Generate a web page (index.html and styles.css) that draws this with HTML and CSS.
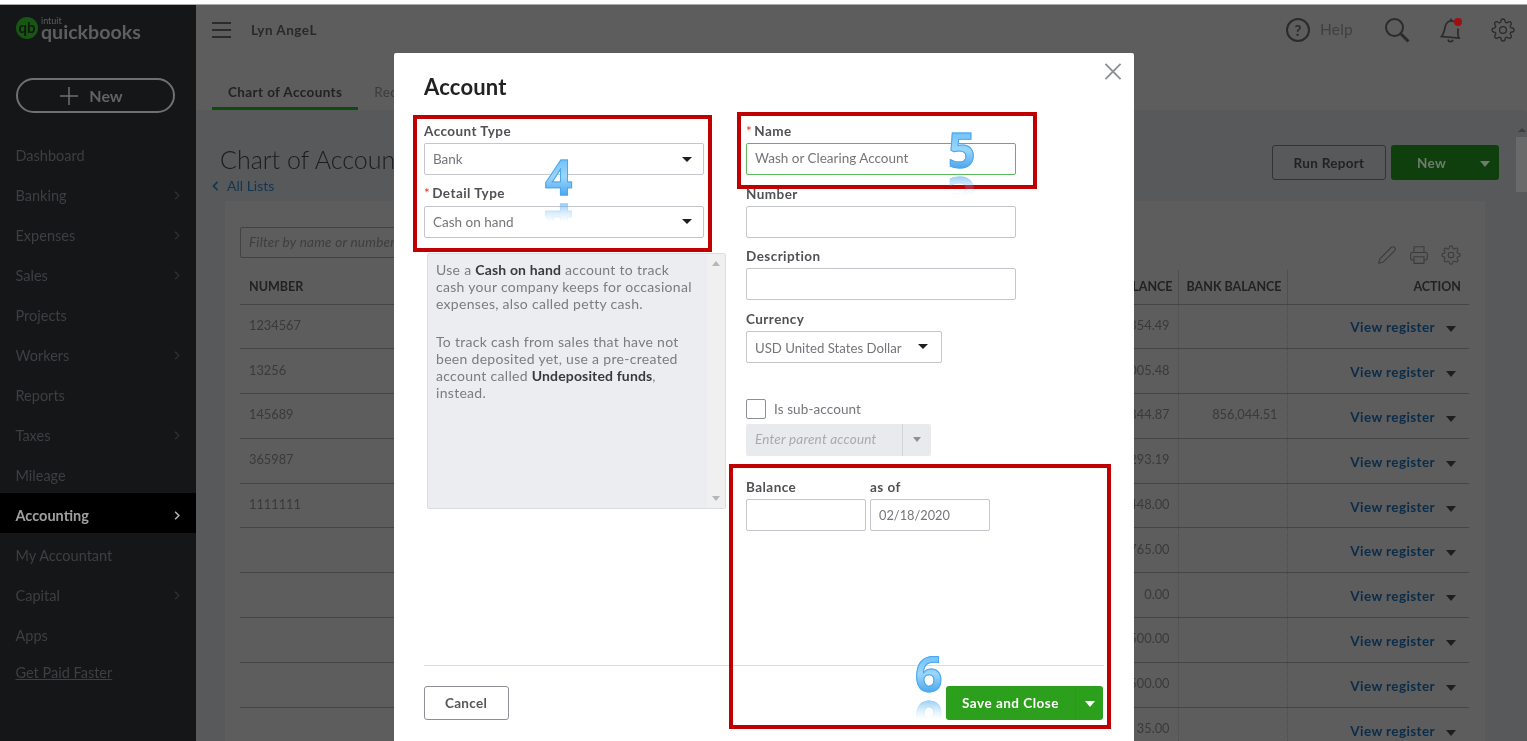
FILE: index.html
```html
<!DOCTYPE html>
<html lang="en">
<head>
<meta charset="utf-8">
<title>Chart of Accounts</title>
<link rel="stylesheet" href="styles.css">
</head>
<body>
<svg class="defs" width="0" height="0">
  <symbol id="gear" viewBox="0 0 24 24"><circle cx="12" cy="12" r="3.4"/><path d="M19.4 15a1.65 1.65 0 0 0 .33 1.82l.06.06a2 2 0 0 1 0 2.83 2 2 0 0 1-2.83 0l-.06-.06a1.65 1.65 0 0 0-1.82-.33 1.65 1.65 0 0 0-1 1.51V21a2 2 0 0 1-2 2 2 2 0 0 1-2-2v-.09A1.65 1.65 0 0 0 9 19.4a1.65 1.65 0 0 0-1.82.33l-.06.06a2 2 0 0 1-2.83 0 2 2 0 0 1 0-2.83l.06-.06a1.65 1.65 0 0 0 .33-1.82 1.65 1.65 0 0 0-1.51-1H3a2 2 0 0 1-2-2 2 2 0 0 1 2-2h.09A1.65 1.65 0 0 0 4.6 9a1.65 1.65 0 0 0-.33-1.82l-.06-.06a2 2 0 0 1 0-2.83 2 2 0 0 1 2.83 0l.06.06a1.65 1.65 0 0 0 1.82.33H9a1.65 1.65 0 0 0 1-1.51V3a2 2 0 0 1 2-2 2 2 0 0 1 2 2v.09a1.65 1.65 0 0 0 1 1.51 1.65 1.65 0 0 0 1.82-.33l.06-.06a2 2 0 0 1 2.83 0 2 2 0 0 1 0 2.83l-.06.06a1.65 1.65 0 0 0-.33 1.82V9a1.65 1.65 0 0 0 1.51 1H21a2 2 0 0 1 2 2 2 2 0 0 1-2 2h-.09a1.65 1.65 0 0 0-1.51 1z"/></symbol>
  <symbol id="chev" viewBox="0 0 8 12"><path d="M1.5 1l5 5-5 5"/></symbol>
</svg>

<div class="strip"></div>
<div class="app">
  <aside class="side">
    <div class="logo">
      <span class="qb">qb</span>
      <span class="wordmark"><span class="intuit">intuit</span><span class="qbname">quickbooks</span></span>
    </div>
    <button class="pill"><svg class="plus" viewBox="0 0 18 18"><path d="M9 0v18M0 9h18"/></svg>New</button>
    <nav class="nav">
      <a class="nav-item">Dashboard</a>
      <a class="nav-item">Banking<svg class="chev"><use href="#chev"/></svg></a>
      <a class="nav-item">Expenses<svg class="chev"><use href="#chev"/></svg></a>
      <a class="nav-item">Sales<svg class="chev"><use href="#chev"/></svg></a>
      <a class="nav-item">Projects</a>
      <a class="nav-item">Workers<svg class="chev"><use href="#chev"/></svg></a>
      <a class="nav-item">Reports</a>
      <a class="nav-item">Taxes<svg class="chev"><use href="#chev"/></svg></a>
      <a class="nav-item">Mileage</a>
      <a class="nav-item active">Accounting<svg class="chev"><use href="#chev"/></svg></a>
      <a class="nav-item">My Accountant</a>
      <a class="nav-item">Capital<svg class="chev"><use href="#chev"/></svg></a>
      <a class="nav-item">Apps</a>
      <a class="nav-item paid">Get Paid Faster</a>
    </nav>
  </aside>

  <main class="main">
    <header class="top">
      <div class="burger"><i></i><i></i><i></i></div>
      <span class="company">Lyn AngeL</span>
      <div class="top-right">
        <span class="help-q">?</span>
        <span class="help">Help</span>
        <svg class="ic search" viewBox="0 0 26 26"><circle cx="10.5" cy="10.5" r="8.5"/><path class="thick" d="M17 17l7.5 7.5"/></svg>
        <span class="bell-wrap">
          <svg class="ic bell" viewBox="0 0 22 26"><path d="M14 4.5C9 2.8 6 5.5 5.2 9.5 4.2 15 3.5 17.500 1.500 19.500l17.500 1.500c-1.500-2.500-1.500-5-.8-9.500"/><path d="M8 22.500c.5 2.800 4 3 5 .4"/><path d="M11 1.500v2.500"/></svg>
          <span class="dot"></span>
        </span>
        <svg class="ic gear"><use href="#gear"/></svg>
      </div>
    </header>
    <div class="tabs">
      <span class="tab current">Chart of Accounts</span>
      <span class="tab">Reconcile</span>
    </div>
    <div class="body">
      <div class="page">
        <div class="title-row">
          <div>
            <h1>Chart of Accounts</h1>
            <a class="back"><svg class="back-chev" viewBox="0 0 8 12"><path d="M6.500 1l-5 5 5 5"/></svg>All Lists</a>
          </div>
          <div class="actions">
            <button class="run">Run Report</button>
            <button class="new">New<span class="caret light"></span></button>
          </div>
        </div>
        <section class="card">
          <div class="tools">
            <div class="filter">Filter by name or number</div>
            <div class="tool-icons">
              <svg class="ic tool" viewBox="0 0 24 24"><path d="M17 3a2.828 2.828 0 1 1 4 4L7.500 20.500 2 22l1.500-5.500L17 3z"/></svg>
              <svg class="ic tool" viewBox="0 0 24 24"><path d="M6 9V2h12v7M6 18H4a2 2 0 0 1-2-2v-5a2 2 0 0 1 2-2h16a2 2 0 0 1 2 2v5a2 2 0 0 1-2 2h-2M6 14h12v8H6z"/></svg>
              <svg class="ic tool"><use href="#gear"/></svg>
            </div>
          </div>
          <table class="coa">
            <colgroup><col><col class="c-bal"><col class="c-bank"><col class="c-act"></colgroup>
            <thead><tr><th>NUMBER</th><th class="num">BALANCE</th><th class="num">BANK BALANCE</th><th class="num">ACTION</th></tr></thead>
            <tbody>
              <tr><td>1234567</td><td class="num">354.49</td><td class="num"></td><td class="act"><a>View register</a><span class="caret"></span></td></tr>
              <tr><td>13256</td><td class="num">005.48</td><td class="num"></td><td class="act"><a>View register</a><span class="caret"></span></td></tr>
              <tr><td>145689</td><td class="num">844.87</td><td class="num">856,044.51</td><td class="act"><a>View register</a><span class="caret"></span></td></tr>
              <tr><td>365987</td><td class="num">293.19</td><td class="num"></td><td class="act"><a>View register</a><span class="caret"></span></td></tr>
              <tr><td>1111111</td><td class="num">448.00</td><td class="num"></td><td class="act"><a>View register</a><span class="caret"></span></td></tr>
              <tr><td></td><td class="num">765.00</td><td class="num"></td><td class="act"><a>View register</a><span class="caret"></span></td></tr>
              <tr><td></td><td class="num">0.00</td><td class="num"></td><td class="act"><a>View register</a><span class="caret"></span></td></tr>
              <tr><td></td><td class="num">500.00</td><td class="num"></td><td class="act"><a>View register</a><span class="caret"></span></td></tr>
              <tr><td></td><td class="num">500.00</td><td class="num"></td><td class="act"><a>View register</a><span class="caret"></span></td></tr>
              <tr><td></td><td class="num">35.00</td><td class="num"></td><td class="act"><a>View register</a><span class="caret"></span></td></tr>
            </tbody>
          </table>
        </section>
      </div>
      <div class="scrollbar"><span class="up"></span><span class="thumb"></span></div>
    </div>
  </main>
</div>

<div class="modal">
  <svg class="close" viewBox="0 0 18 18"><path d="M1 1l16 16M17 1L1 17"/></svg>
  <div class="modal-body">
    <h2>Account</h2>
    <div class="cols">
      <div class="col-left">
        <label class="lbl">Account Type</label>
        <div class="input select wide">Bank<span class="caret"></span></div>
        <label class="lbl"><span class="req">*</span>Detail Type</label>
        <div class="input select wide last">Cash on hand<span class="caret"></span></div>
        <div class="info">
          <p>Use a <b>Cash on hand</b> account to track cash your company keeps for occasional expenses, also called petty cash.</p>
          <p>To track cash from sales that have not been deposited yet, use a pre-created account called <b>Undeposited funds</b>, instead.</p>
          <div class="info-track"><span class="tri-up"></span><span class="tri-down"></span></div>
        </div>
      </div>
      <div class="col-right">
        <label class="lbl"><span class="req">*</span>Name</label>
        <div class="input focus">Wash or Clearing Account</div>
        <label class="lbl">Number</label>
        <div class="input"></div>
        <label class="lbl">Description</label>
        <div class="input"></div>
        <label class="lbl">Currency</label>
        <div class="input select currency">USD United States Dollar<span class="caret"></span></div>
        <div class="check-row"><span class="box"></span>Is sub-account</div>
        <div class="parent"><span class="parent-text">Enter parent account</span><span class="parent-drop"><span class="caret muted"></span></span></div>
        <div class="balance">
          <div class="bal-field"><label class="lbl">Balance</label><div class="input"></div></div>
          <div class="bal-field"><label class="lbl">as of</label><div class="input date">02/18/2020</div></div>
        </div>
      </div>
    </div>
  </div>
  <footer class="modal-foot">
    <button class="cancel">Cancel</button>
    <button class="save"><span class="save-text">Save and Close</span><span class="save-drop"><span class="caret white"></span></span></button>
  </footer>
</div>

<div class="mark mark-a"></div>
<div class="mark mark-b"></div>
<div class="mark mark-c"></div>
<span class="step step-4">4</span>
<span class="step step-5">5</span>
<span class="step step-6">6</span>
</body>
</html>
```

FILE: styles.css
```css
* { box-sizing: border-box; }
html, body { height: 100%; margin: 0; overflow: hidden; }
body { font-family: "Lato", "Open Sans", sans-serif; font-size: 14px; color: #2f3033; background: #fff; position: relative; filter: blur(.4px); }
.defs { position: absolute; }
button { font-family: inherit; }
h1, h2, p { margin: 0; }

.strip { height: 5px; background: #fff; border-bottom: 1px solid #aaa; }
.app { display: flex; height: 736px; }

/* sidebar */
.side { width: 196px; flex: none; background: #151618; color: #3e3f42; }
.logo { display: flex; align-items: flex-start; height: 50px; padding: 11px 0 0 16px; gap: 3px; }
.qb { width: 22px; height: 22px; border-radius: 50%; background: #175712; color: #0f1a0f; font-size: 15px; font-weight: 700; line-height: 20px; text-align: center; flex: none; margin-top: 1px; }
.wordmark { display: flex; flex-direction: column; color: #5e5f61; }
.intuit { font-size: 9px; line-height: 8px; margin-top: 1px; }
.qbname { font-size: 19.600px; font-weight: 700; line-height: 19px; margin-top: -3.500px; }
.pill { display: flex; align-items: center; justify-content: center; gap: 11px; width: 159px; height: 35px; margin: 23px 0 0 16px; background: transparent; border: 2px solid #6f7072; border-radius: 18px; color: #626365; font-size: 16px; font-weight: 700; padding: 0 8px 0 0; }
.plus { width: 18px; height: 18px; fill: none; stroke: #6f7072; stroke-width: 1.500; }
.nav { margin-top: 20px; display: flex; flex-direction: column; }
.nav-item { display: flex; align-items: center; justify-content: space-between; height: 40px; padding: 4px 16px 0 15.500px; font-size: 14.500px; }
.chev { width: 6px; height: 11px; fill: none; stroke: #303135; stroke-width: 1.500; }
.nav-item.active { background: #000; color: #a0a0a0; font-weight: 700; }
.active .chev { stroke: #b5b5b5; stroke-width: 2; }
.nav-item.paid { text-decoration: underline; height: 38px; padding-top: 0; }

/* main */
.main { flex: 1; min-width: 0; display: flex; flex-direction: column; background: #5d5d5d; }
.top { display: flex; align-items: center; height: 52px; padding: 0 12px 0 16px; }
.burger { width: 19px; display: flex; flex-direction: column; gap: 5px; margin-top: -2px; }
.burger i { display: block; height: 2px; background: #2b2b2b; }
.company { margin-left: 20px; font-size: 13.500px; font-weight: 700; letter-spacing: .5px; color: #292929; margin-top: -2px; }
.top-right { margin-left: auto; display: flex; align-items: center; margin-top: -3px; }
.help-q { width: 24px; height: 24px; border: 2px solid #2b2b2b; border-radius: 50%; text-align: center; font-size: 15px; font-weight: 700; line-height: 20px; color: #2b2b2b; }
.help { margin-left: 10px; font-size: 15.500px; letter-spacing: .2px; color: #404040; margin-top: -1px; }
.ic { fill: none; stroke: #2b2b2b; stroke-width: 1.700; flex: none; }
.search { width: 26px; height: 26px; margin-left: 31px; stroke-width: 2; }
.thick { stroke-width: 3; }
.bell-wrap { position: relative; margin-left: 30px; width: 22px; height: 26px; }
.bell { width: 22px; height: 26px; }
.dot { position: absolute; right: 0; top: 1px; width: 8px; height: 8px; border-radius: 50%; background: #a00f0f; }
.gear { width: 24px; height: 24px; margin-left: 29px; stroke: #2b2b2b; stroke-width: 1.300; }

.tabs { display: flex; height: 53px; margin-left: 16px; padding-top: 27px; }
.tab { font-size: 13.500px; letter-spacing: .4px; color: #3c3c3c; padding: 0 16px; height: 26px; }
.tab.current { color: #222; font-weight: 700; border-bottom: 3px solid #0e4a0d; }

.body { flex: 1; min-height: 0; display: flex; background: #58595a; overflow: hidden; border-top-right-radius: 4px; }
.page { flex: 1; min-width: 0; padding: 34px 17px 0 16px; }
.title-row { display: flex; justify-content: space-between; height: 57px; }
h1 { font-size: 25px; font-weight: 300; line-height: 30px; color: #1c1c1c; margin-left: 8px; white-space: nowrap; }
.back { display: flex; align-items: center; gap: 8px; margin-top: 3px; font-size: 14px; color: #123552; }
.back-chev { width: 7px; height: 10px; fill: none; stroke: #123552; stroke-width: 2; }
.actions { display: flex; gap: 5px; margin-top: 1px; }
.actions button { height: 35px; border-radius: 3px; font-size: 13.500px; font-weight: 700; letter-spacing: .3px; }
.run { width: 114px; background: transparent; border: 1px solid #333; color: #222; }
.new { width: 108px; background: #103f0e; border: 0; color: #6e7c6c; position: relative; padding: 0 27px 0 0; }
.new .caret { position: absolute; right: 9px; top: 16px; }

.card { background: #5d5d5d; margin: 0 14px 0 13px; padding: 26px 16px 0 15px; }
.tools { display: flex; justify-content: space-between; align-items: center; height: 31px; margin-bottom: 12px; }
.filter { width: 300px; height: 31px; border: 1px solid #424242; border-radius: 2px; padding: 0 8px; line-height: 29px; font-size: 13.500px; letter-spacing: .25px; font-style: italic; color: #3e3e3e; white-space: nowrap; overflow: hidden; }
.tool-icons { display: flex; gap: 12px; margin: 24px 8px 0 0; align-items: center; height: 20px; }
.tool { width: 20px; height: 20px; stroke: #3c3c3c; stroke-width: 1.300; }

.coa { width: 100%; table-layout: fixed; border-collapse: collapse; font-size: 12.800px; }
.c-bal { width: 240px; }
.c-bank { width: 109px; }
.c-act { width: 182px; }
.coa th { height: 34px; text-align: left; font-size: 12.500px; font-weight: 700; color: #222; padding: 0 5px 0 8px; white-space: nowrap; border-bottom: 1px solid #454545; border-right: 1px solid #4f4f4f; }
.coa th:first-child { padding-left: 9px; }
.coa th:last-child { border-right: 0; padding-right: 8px; }
.coa td { height: 44.800px; padding: 0 9px 3px; color: #3a3a3a; border-bottom: 1px solid #454545; border-right: 1px dotted #4d4d4d; }
.coa td:last-child { border-right: 0; }
.coa .num { text-align: right; }
.coa td.num:nth-child(2) { padding-right: 8px; }
.coa td.act { text-align: right; padding: 2px 13px 0 0; white-space: nowrap; }
.act a { color: #0a2c48; font-size: 13.500px; font-weight: 700; letter-spacing: .4px; }
.caret { display: inline-block; width: 0; height: 0; border-left: 5px solid transparent; border-right: 5px solid transparent; border-top: 6px solid #1e1e1e; }
.act .caret { margin-left: 11px; }
.caret.light { border-top-color: #6e7c6c; }
.caret.white { border-top-color: #fff; }
.caret.muted { border-top-color: #8d9096; border-left-width: 4px; border-right-width: 4px; border-top-width: 5px; }

.scrollbar { width: 11px; flex: none; display: flex; flex-direction: column; align-items: center; padding-top: 18px; }
.up { width: 0; height: 0; border-left: 4px solid transparent; border-right: 4px solid transparent; border-bottom: 4px solid #3e3e3e; }
.thumb { display: block; width: 100%; height: 55px; margin-top: 5px; background: #6a6a6a; }

/* modal */
.modal { position: absolute; left: 394px; top: 53px; width: 740px; height: 688px; background: #fff; border-radius: 2px 2px 0 0; display: flex; flex-direction: column; padding: 0 30px; color: #393a3d; }
.close { position: absolute; right: 12px; top: 10px; width: 18px; height: 17px; fill: none; stroke: #8d9096; stroke-width: 2; }
.modal-body { flex: 1; min-height: 0; padding-top: 20px; }
h2 { font-size: 22px; font-weight: 700; line-height: 28px; color: #222; letter-spacing: .2px; }
.cols { display: grid; grid-template-columns: 302px 270px; column-gap: 20px; margin-top: 21px; }
.lbl { display: block; height: 18px; line-height: 18px; margin-bottom: 3px; font-size: 13.500px; font-weight: 700; letter-spacing: .45px; color: #505155; }
.wide + .lbl { margin-top: -1px; margin-bottom: 4px; }
.req { color: #e0301e; margin-right: 2px; font-weight: 400; }
.input { height: 32px; margin-bottom: 9.670px; border: 1px solid #c4c6cb; border-radius: 2px; padding: 0 8px; line-height: 30px; font-size: 13.500px; color: #75767b; background: #fff; }
.select { display: flex; align-items: center; justify-content: space-between; padding-right: 11px; }
.select .caret { border-left-width: 5px; border-right-width: 5px; border-top-width: 5px; }
.wide { width: 280px; }
.last { margin-bottom: 15px; padding-top: 1px; }
.last .caret { margin-top: -1px; }
.focus { border-color: #5cb85c; line-height: 28px; }
.currency { width: 196px; margin-bottom: 36px; padding-top: 3px; padding-right: 13px; font-size: 13.200px; }
.currency .caret { margin-top: -3px; }
.date { font-size: 12.800px; }
.info { position: relative; width: 299px; height: 256px; margin-left: 3px; background: #ecedf0; border: 1px solid #dcdde0; border-radius: 2px; padding: 7px 30px 0 8px; font-size: 14px; letter-spacing: .3px; line-height: 17px; color: #7b7c81; }
.info p + p { margin-top: 21px; }
.info b { color: #393a3d; letter-spacing: .15px; }
.info-track { position: absolute; right: 0; top: 0; bottom: 0; width: 18px; background: #f0f0f1; display: flex; flex-direction: column; align-items: center; justify-content: space-between; padding: 7px 0; }
.tri-up { border-left: 4px solid transparent; border-right: 4px solid transparent; border-bottom: 5px solid #b5b6ba; }
.tri-down { border-left: 4px solid transparent; border-right: 4px solid transparent; border-top: 5px solid #b5b6ba; }
.check-row { display: flex; align-items: center; gap: 8px; height: 20px; font-size: 13.500px; letter-spacing: .1px; color: #75767b; margin-bottom: 5px; }
.box { width: 20px; height: 20px; border: 1px solid #8d9096; border-radius: 2px; }
.parent { display: flex; width: 185px; height: 32px; background: #e9eaed; border-radius: 2px; font-size: 13.500px; letter-spacing: .2px; font-style: italic; color: #a9aaae; line-height: 31px; margin-bottom: 22px; }
.parent-text { flex: 1; padding-left: 9px; white-space: nowrap; }
.parent-drop { width: 29px; flex: none; display: flex; align-items: center; justify-content: center; border-left: 1px solid #d4d5d9; }
.balance { display: flex; gap: 4px; }
.bal-field { width: 120px; }
.modal-foot { display: flex; justify-content: space-between; height: 76px; padding-top: 20px; border-top: 1px solid #dcdde0; }
.modal-foot button { height: 34px; border-radius: 3px; font-size: 13.500px; font-weight: 700; }
.cancel { width: 85px; margin-left: -.5px; background: #fff; border: 1px solid #8d9096; color: #55565a; letter-spacing: .3px; }
.save { width: 157px; margin-right: 1px; display: flex; align-items: center; background: #2ca01c; border: 0; color: #fff; padding: 0; letter-spacing: .5px; }
.save-text { flex: 1; text-align: center; white-space: nowrap; }
.save-drop { width: 28px; height: 100%; flex: none; display: flex; align-items: center; justify-content: center; border-left: 1px solid #2a9a1b; padding-top: 2px; }

/* annotations */
.mark { position: absolute; border: 4px solid #c00000; }
.mark-a { left: 413px; top: 115px; width: 299px; height: 137px; }
.mark-b { left: 737px; top: 112px; width: 300px; height: 77px; }
.mark-c { left: 729px; top: 464px; width: 382px; height: 265px; }
.step { position: absolute; font-family: "Open Sans", sans-serif; font-size: 48px; font-weight: 700; line-height: 40px; background: linear-gradient(#6cc0f7, #9ad6fb 50%, #45a2ec); -webkit-background-clip: text; background-clip: text; color: transparent; -webkit-text-stroke: 1px #4aa6ee; -webkit-box-reflect: below 5px linear-gradient(transparent 50%, rgba(255, 255, 255, .6)); }
.step-4 { left: 545px; top: 157px; }
.step-5 { left: 948px; top: 130px; }
.step-6 { left: 915px; top: 654px; }
```
